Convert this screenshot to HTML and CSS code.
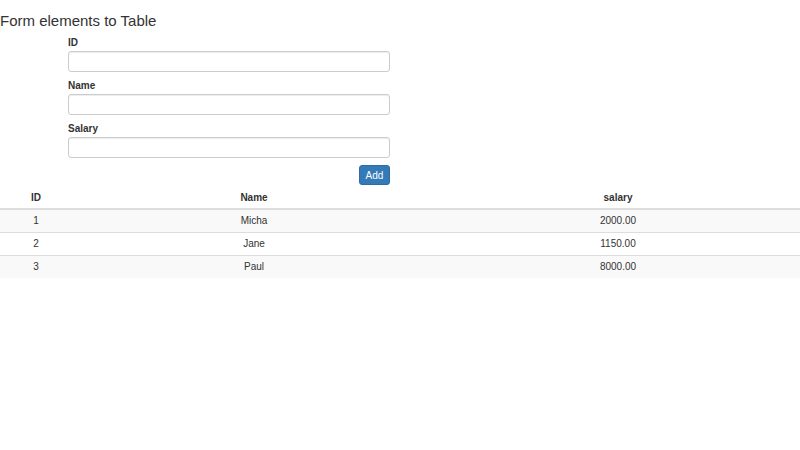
FILE: index.html
```html
<!DOCTYPE html>
<html>
<head>
<meta charset="utf-8">
<link rel="stylesheet" href="styles.css">
</head>
<body>
<h1 class="title">Form elements to Table</h1>
<form class="form">
  <div class="group">
    <label class="label">ID</label>
    <input class="input" type="text">
  </div>
  <div class="group">
    <label class="label">Name</label>
    <input class="input" type="text">
  </div>
  <div class="group">
    <label class="label">Salary</label>
    <input class="input" type="text">
  </div>
  <div class="actions">
    <button class="btn" type="button">Add</button>
  </div>
</form>
<table class="table">
  <thead>
    <tr><th class="c-id">ID</th><th class="c-name">Name</th><th>salary</th></tr>
  </thead>
  <tbody>
    <tr><td>1</td><td>Micha</td><td>2000.00</td></tr>
    <tr><td>2</td><td>Jane</td><td>1150.00</td></tr>
    <tr><td>3</td><td>Paul</td><td>8000.00</td></tr>
  </tbody>
</table>
</body>
</html>
```
FILE: styles.css
```css
html, body {
  margin: 0;
  padding: 0;
  background: #fff;
}
body {
  font-family: "Liberation Sans", Arial, sans-serif;
  font-size: 10px;
  color: #333;
  line-height: 1.42857;
}
.title {
  margin: 11px 0 0 0;
  font-size: 15px;
  font-weight: 500;
  line-height: 19px;
}
.form {
  margin: 6px 0 0 68px;
  width: 322px;
}
.group {
  margin-bottom: 7px;
}
.label {
  display: block;
  font-weight: bold;
  line-height: 14px;
  margin-bottom: 1px;
}
.input {
  display: block;
  box-sizing: border-box;
  width: 100%;
  height: 21px;
  margin: 0;
  border: 1px solid #ccc;
  border-radius: 3px;
  box-shadow: inset 0 1px 1px rgba(0,0,0,0.075);
  background: #fff;
}
.actions {
  display: flex;
  justify-content: flex-end;
}
.btn {
  box-sizing: border-box;
  width: 31px;
  height: 20px;
  padding: 0;
  background: #337ab7;
  border: 1px solid #2e6da4;
  border-radius: 3px;
  color: #fff;
  font-family: inherit;
  font-size: 10px;
}
.table {
  margin-top: 2px;
  width: 100%;
  border-collapse: collapse;
  border-spacing: 0;
}
.table th, .table td {
  text-align: center;
  padding: 5px;
  line-height: 12px;
  border-top: 1px solid #ddd;
}
.table thead th {
  border-top: 0;
  border-bottom: 2px solid #ddd;
  font-weight: bold;
  padding: 5px 5px 4px;
}
.table tbody tr:nth-child(odd) {
  background: #f9f9f9;
}
.table tbody tr:first-child td {
  border-top: 0;
}
.c-id { width: 62px; }
.c-name { width: 354px; }
```
